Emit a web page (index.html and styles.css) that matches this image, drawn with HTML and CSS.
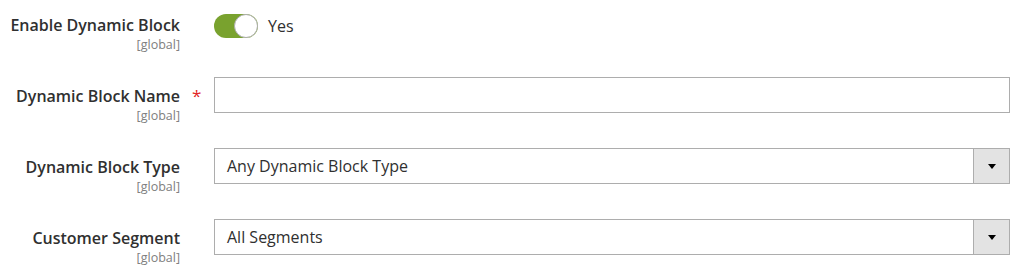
FILE: index.html
```html
<!DOCTYPE html>
<html lang="en">
<head>
    <meta charset="UTF-8">
    <title>Dynamic Block</title>
    <link rel="stylesheet" href="styles.css">
</head>
<body>
    <div class="fieldset">
        <div class="field">
            <div class="field-label">
                <span class="label-text">Enable Dynamic Block</span>
                <span class="scope">[global]</span>
            </div>
            <div class="field-mark"></div>
            <div class="field-control">
                <div class="toggle">
                    <span class="toggle-switch"><span class="toggle-knob"></span></span>
                    <span class="toggle-label">Yes</span>
                </div>
            </div>
        </div>

        <div class="field">
            <div class="field-label">
                <span class="label-text">Dynamic Block Name</span>
                <span class="scope">[global]</span>
            </div>
            <div class="field-mark"><span class="required">*</span></div>
            <div class="field-control">
                <input type="text" class="admin-input">
            </div>
        </div>

        <div class="field">
            <div class="field-label">
                <span class="label-text">Dynamic Block Type</span>
                <span class="scope">[global]</span>
            </div>
            <div class="field-mark"></div>
            <div class="field-control">
                <div class="admin-select">
                    <span class="select-value">Any Dynamic Block Type</span>
                    <span class="select-button"><span class="select-arrow"></span></span>
                </div>
            </div>
        </div>

        <div class="field">
            <div class="field-label">
                <span class="label-text">Customer Segment</span>
                <span class="scope">[global]</span>
            </div>
            <div class="field-mark"></div>
            <div class="field-control">
                <div class="admin-select">
                    <span class="select-value">All Segments</span>
                    <span class="select-button"><span class="select-arrow"></span></span>
                </div>
            </div>
        </div>
    </div>
</body>
</html>
```

FILE: styles.css
```css
* {
    margin: 0;
    padding: 0;
    box-sizing: border-box;
}

body {
    background: #ffffff;
    color: #303030;
    font-family: 'Open Sans', 'Noto Sans', sans-serif;
    width: 1024px;
    height: 272px;
    overflow: hidden;
}

.fieldset {
    padding: 6px 14px 0 0;
}

.field {
    display: grid;
    grid-template-columns: 180px 34px 1fr;
    align-items: start;
    margin-bottom: 24px;
}

.field:last-child {
    margin-bottom: 0;
}

.field-label {
    display: flex;
    flex-direction: column;
    align-items: flex-end;
    text-align: right;
    padding-top: 8px;
}

.label-text {
    font-size: 16px;
    font-weight: 600;
    line-height: 22px;
    color: #303030;
}

.scope {
    font-size: 12.5px;
    line-height: 17px;
    color: #808080;
}

.field-mark {
    padding: 8px 0 0 12px;
}

.required {
    color: #e22626;
    font-size: 17px;
    line-height: 22px;
}

.field-control {
    height: 36px;
    display: flex;
    align-items: center;
}

.toggle {
    display: flex;
    align-items: center;
    gap: 10px;
    margin-top: 3px;
}

.toggle-switch {
    position: relative;
    display: block;
    width: 44px;
    height: 24px;
    border-radius: 12px;
    background: #79a22e;
}

.toggle-knob {
    position: absolute;
    top: 0;
    right: 0;
    width: 24px;
    height: 24px;
    border-radius: 50%;
    background: #ffffff;
    border: 1px solid #adadad;
}

.toggle-label {
    font-size: 16px;
    line-height: 22px;
    color: #303030;
}

.admin-input {
    width: 100%;
    height: 36px;
    border: 1px solid #adadad;
    background: #ffffff;
    font-family: inherit;
    font-size: 16px;
    padding: 0 12px;
    outline: none;
}

.admin-select {
    display: flex;
    width: 100%;
    height: 36px;
    border: 1px solid #adadad;
    background: #ffffff;
}

.select-value {
    flex: 1;
    font-size: 16px;
    line-height: 34px;
    padding-left: 12px;
    color: #303030;
}

.select-button {
    width: 36px;
    display: flex;
    align-items: center;
    justify-content: center;
    background: #e3e3e3;
    border-left: 1px solid #adadad;
}

.select-arrow {
    width: 0;
    height: 0;
    border-left: 4px solid transparent;
    border-right: 4px solid transparent;
    border-top: 5px solid #000000;
}
```
